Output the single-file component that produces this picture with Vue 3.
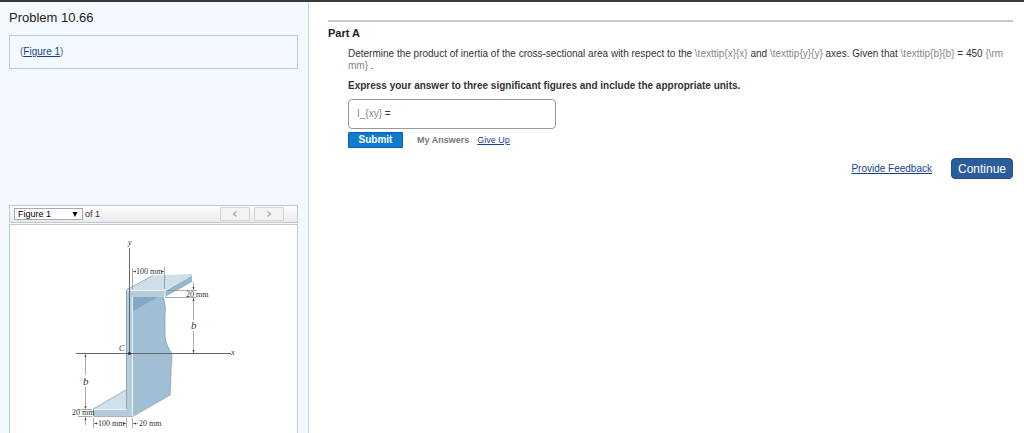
<template>
  <div class="page">
    <aside class="sidebar">
      <h1 class="problem-title">Problem 10.66</h1>
      <div class="problem-box">(<a href="#figure">Figure 1</a>)</div>

      <div class="figure-bar">
        <select v-model="figure" class="figure-select" aria-label="Figure">
          <option v-for="name in figures" :key="name" :value="name">{{ name }}</option>
        </select>
        <span class="figure-count">of {{ figures.length }}</span>
        <div class="figure-nav">
          <button type="button" aria-label="Previous figure">
            <svg viewBox="0 0 6 8"><path d="M4.5 1.5L1.5 4L4.5 6.5" /></svg>
          </button>
          <button type="button" aria-label="Next figure">
            <svg viewBox="0 0 6 8"><path d="M1.5 1.5L4.5 4L1.5 6.5" /></svg>
          </button>
        </div>
      </div>

      <div id="figure" class="figure-panel">
        <svg class="diagram" viewBox="10 225 287 208" role="img" aria-label="Cross section">
          <!-- side of the web -->
          <path fill="#a0bfd5" d="M133 296H163C165 303 166 308 165 315V334C165 341 168 348 171 352C173 358 171 365 171 373L170 395L133 416Z" />
          <path fill="#81a9c5" d="M133 297H158L133 311Z" />
          <path class="edge" d="M163 297C165 303 166 308 165 315V334C165 341 168 348 171 352C173 358 171 365 171 373L170 395L133 416.5" />
          <!-- top flange -->
          <path fill="#cfdfea" d="M126 290L153 275.5L192 274L165 290Z" />
          <path fill="#93b8d2" d="M165 290L192 274V282L165 297Z" />
          <path class="edge" d="M126 290L153 275.5" />
          <path class="light" d="M165 290.5L192 275" />
          <!-- bottom flange -->
          <path fill="#d0e0ea" d="M93 409L126 390V409Z" />
          <path class="edge" d="M93 409L126 390" />
          <!-- front face -->
          <path fill="#b4ccdc" d="M126 290H165V297H133V416H93V409H126Z" />
          <path class="light" d="M127 290.5H165V297M132.5 297V416M93 409.5H126" />
          <path class="edge" d="M126.5 290V409M93.5 409V416.5H133" />

          <!-- axes -->
          <path class="axis" d="M129.5 248V353M76 353.5H231" />
          <circle cx="129.5" cy="353.5" r="1.6" />

          <!-- dimension lines -->
          <path class="dim" d="M132.5 268V289M164.5 267V289M133 271.5H136M161 271.5H164" />
          <path class="dim" d="M167 290.5H197M165 297.5H196M193.5 282V290M193.5 298V320M193.5 331V353" />
          <path class="dim" d="M85.5 354V375M85.5 387V408M78 409.5H92M78 416.5H92M85.5 417V425" />
          <path class="dim" d="M93.5 418V428M126.5 418V428M132.5 418V428M94 423.5H98M123 423.5H126M133 423.5H138" />
          <path
            class="arrows"
            d="M133 271.5l3-1v2zM164 271.5l-3-1v2zM193.5 290l-1-3h2zM193.5 298l-1 3h2zM193.5 353l-1-3h2zM85.5 354l-1 3h2zM85.5 409l-1-3h2zM85.5 417l-1 3h2zM94 423.5l3-1v2zM126 423.5l-3-1v2zM133 423.5l3-1v2z"
          />

          <text x="128" y="245" class="name">y</text>
          <text x="231" y="355" class="name">x</text>
          <text x="119" y="351" class="name">C</text>
          <text x="191" y="329" class="length">b</text>
          <text x="83" y="385" class="length">b</text>
          <text x="136" y="274">100 mm</text>
          <text x="186" y="297">20 mm</text>
          <text x="72" y="415">20 mm</text>
          <text x="98" y="426">100 mm</text>
          <text x="139" y="426">20 mm</text>
        </svg>
      </div>
    </aside>

    <main class="content">
      <h2 class="part-title">Part A</h2>
      <form class="part" @submit.prevent>
        <p class="question">
          Determine the product of inertia of the cross-sectional area with respect to the
          <span class="tex">\texttip{x}{x}</span> and <span class="tex">\texttip{y}{y}</span> axes. Given that
          <span class="tex">\texttip{b}{b}</span> = 450 <span class="tex">{\rm mm}</span> .
        </p>
        <p class="instruction">
          Express your answer to three significant figures and include the appropriate units.
        </p>
        <div class="answer-box">
          <label for="answer"><span class="tex">I_{xy}</span> =</label>
          <input id="answer" v-model="answer" type="text" />
        </div>
        <div class="actions">
          <button type="submit" class="submit">Submit</button>
          <span class="my-answers">My Answers</span>
          <a href="#give-up">Give Up</a>
        </div>
      </form>
      <div class="footer">
        <a href="#feedback">Provide Feedback</a>
        <button type="button" class="continue">Continue</button>
      </div>
    </main>
  </div>
</template>

<script setup>
import { ref } from "vue";

const figures = ["Figure 1"];
const figure = ref(figures[0]);
const answer = ref("");
</script>

<style>
body {
  margin: 0;
  background: #fff;
}
</style>

<style scoped>
.page {
  box-sizing: border-box;
  display: grid;
  grid-template-columns: 309px 1fr;
  min-height: 100vh;
  border-top: 2px solid #3a383b;
  font-family: "Liberation Sans", Arial, sans-serif;
  font-size: 10px;
  line-height: 12px;
  color: #333;
}
a {
  color: #1a3f9c;
}
button,
select,
input {
  font-family: inherit;
}
.sidebar {
  box-sizing: border-box;
  display: flex;
  flex-direction: column;
  padding: 8px 10px 0 9px;
  border-right: 1px solid #c9d6e4;
  background: #f4f9ff;
}
.problem-title {
  margin: 0 0 9px;
  font-size: 13px;
  font-weight: normal;
  line-height: 16px;
  color: #222;
}
.problem-box {
  padding: 10px;
  margin-bottom: 136px;
  border: 1px solid #b9cadb;
  color: #666;
}
.figure-bar {
  display: flex;
  align-items: center;
  box-sizing: border-box;
  height: 18px;
  padding: 0 13px 0 4px;
  margin-bottom: 1px;
  border: 1px solid #b9cadb;
  font-size: 9px;
  background: linear-gradient(#fff, #e9e9e9);
}
.figure-select {
  width: 69px;
  height: 12px;
  padding: 0 3px;
  border: 1px solid #aaa;
  appearance: none;
  font-size: 9px;
  line-height: 10px;
  color: #000;
  background: #fff
    url("data:image/svg+xml,%3Csvg xmlns='http://www.w3.org/2000/svg' width='6' height='5'%3E%3Cpath d='M0.500 0H5.500L3 5Z'/%3E%3C/svg%3E")
    no-repeat right 4px center;
}
.figure-count {
  margin-left: 2px;
}
.figure-nav {
  display: flex;
  gap: 4px;
  margin-left: auto;
}
.figure-nav button {
  display: flex;
  align-items: center;
  justify-content: center;
  width: 30px;
  height: 14px;
  padding: 0;
  border: 1px solid #d4d4d4;
  border-radius: 1px;
  background: #f3f3f3;
}
.figure-nav svg {
  width: 6px;
  height: 8px;
  fill: none;
  stroke: #aaa;
  stroke-width: 1.4;
}
.figure-panel {
  flex: 1;
  border: 1px solid #b9cadb;
  border-bottom: 0;
  background: #fff;
}
.diagram {
  display: block;
  width: 100%;
  font-family: "Liberation Serif", "Times New Roman", serif;
  font-size: 8px;
  fill: #333;
}
.diagram .edge {
  fill: none;
  stroke: #8095a3;
  stroke-width: 0.7;
}
.diagram .light {
  fill: none;
  stroke: #eef5f9;
}
.diagram .axis {
  fill: none;
  stroke: #666;
}
.diagram .dim {
  fill: none;
  stroke: #888;
  stroke-width: 0.7;
}
.diagram .arrows {
  fill: #444;
}
.name,
.length {
  font-style: italic;
}
.length {
  font-size: 11px;
}
.content {
  padding: 18px 11px 0 19px;
}
.part-title {
  margin: 0;
  padding-top: 4px;
  border-top: 2px solid #c8c8c8;
  font-size: 11px;
  line-height: 14px;
  color: #222;
}
.part {
  padding: 8px 0 0 20px;
}
.question {
  margin: 0 0 8px;
}
.tex {
  color: #888;
}
.instruction {
  margin: 0 0 7px;
  font-weight: bold;
}
.answer-box {
  display: flex;
  align-items: center;
  box-sizing: border-box;
  width: 208px;
  height: 30px;
  padding: 0 8px;
  border: 1px solid #999;
  border-radius: 4px;
}
.answer-box input {
  flex: 1;
  min-width: 0;
  border: 0;
  outline: 0;
  font-size: 10px;
}
.actions {
  display: flex;
  align-items: center;
  margin-top: 3px;
  font-size: 9px;
}
.submit {
  width: 55px;
  height: 16px;
  padding: 0;
  border: 1px solid #0a5fae;
  border-radius: 1px;
  background: #0f7bd0;
  font-size: 10px;
  font-weight: bold;
  line-height: 14px;
  color: #fff;
}
.my-answers {
  margin: 0 8px 0 14px;
  font-weight: bold;
  color: #777;
}
.footer {
  display: flex;
  align-items: center;
  justify-content: flex-end;
  gap: 19px;
  margin-top: 10px;
}
.continue {
  width: 62px;
  height: 21px;
  padding: 0;
  border: 1px solid #24508a;
  border-radius: 4px;
  background: #2b5c9b;
  font-size: 12px;
  color: #fff;
}
</style>
